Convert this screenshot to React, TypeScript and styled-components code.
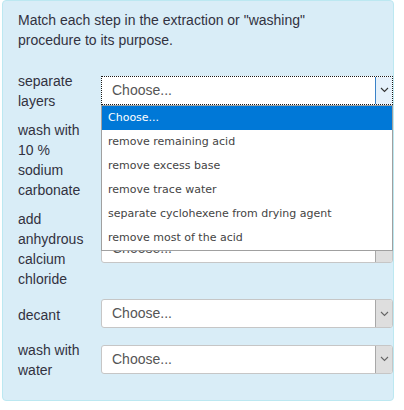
import React from 'react';
import styled, { createGlobalStyle } from 'styled-components';

const steps = [
  { label: 'separate layers', open: true },
  { label: 'wash with 10 % sodium carbonate' },
  { label: 'add anhydrous calcium chloride' },
  { label: 'decant' },
  { label: 'wash with water' },
];

const options = [
  'Choose...',
  'remove remaining acid',
  'remove excess base',
  'remove trace water',
  'separate cyclohexene from drying agent',
  'remove most of the acid',
];

const App = () => {
  return (
    <>
      <GlobalStyle />
      <Panel>
        <Question>Match each step in the extraction or "washing" procedure to its purpose.</Question>
        <Rows>
          {steps.map((step, index) => (
            <Row key={index}>
              <StepLabel>{step.label}</StepLabel>
              <SelectBox $focused={!!step.open}>
                <SelectText>Choose...</SelectText>
                <ArrowButton $focused={!!step.open}>
                  <svg width="9" height="6" viewBox="0 0 9 6">
                    <path d="M1 1 L4.5 4.5 L8 1" fill="none" stroke="currentColor" strokeWidth="1.1" />
                  </svg>
                </ArrowButton>
                {step.open && (
                  <OptionList>
                    {options.map((opt, i) => (
                      <OptionItem key={i} $active={i === 0}>{opt}</OptionItem>
                    ))}
                  </OptionList>
                )}
              </SelectBox>
            </Row>
          ))}
        </Rows>
      </Panel>
    </>
  );
};

export default App;

const GlobalStyle = createGlobalStyle`
  body {
    margin: 0;
    background: #fff;
    font-family: "Liberation Sans", Arial, sans-serif;
  }
`;

const Panel = styled.div`
  width: 392px;
  box-sizing: border-box;
  margin-left: 2px;
  padding: 9px 0 20px 15px;
  background: #d9edf7;
  border: 1px solid #bce8f1;
  border-radius: 4px;
  color: #32323f;
  font-size: 14px;
  line-height: 20px;
`;

const Question = styled.div`
  max-width: 320px;
  margin-bottom: 21px;
`;

const Rows = styled.div`
  display: flex;
  flex-direction: column;
  gap: 9px;
`;

const Row = styled.div`
  display: grid;
  grid-template-columns: 77px 1fr;
  column-gap: 6px;
  align-items: center;
`;

const StepLabel = styled.div`
  line-height: 20px;
`;

const SelectBox = styled.div<{ $focused: boolean }>`
  position: relative;
  display: flex;
  align-items: stretch;
  height: 29px;
  box-sizing: border-box;
  margin: 1px 0 3px;
  background: #fff;
  border: 1px ${p => (p.$focused ? 'dotted #1a1a1a' : 'solid #c6c6c6')};
  border-radius: ${p => (p.$focused ? '0' : '3px')};
`;

const SelectText = styled.div`
  flex: 1;
  padding-left: 10px;
  line-height: 27px;
  color: #555;
  font-size: 14px;
`;

const ArrowButton = styled.div<{ $focused: boolean }>`
  width: 16px;
  display: flex;
  align-items: center;
  justify-content: center;
  background: ${p => (p.$focused ? '#e5f1fb' : '#dedede')};
  border-left: 1px solid ${p => (p.$focused ? '#3a82c8' : '#a8a8a8')};
  color: ${p => (p.$focused ? '#333' : '#666')};
  border-radius: ${p => (p.$focused ? '0' : '0 2px 2px 0')};
`;

const OptionList = styled.div`
  position: absolute;
  top: calc(100% + 1px);
  left: -1px;
  right: -1px;
  z-index: 5;
  background: #fff;
  border: 1px solid #a0a0a0;
  font-family: "DejaVu Sans", Verdana, sans-serif;
  font-size: 11px;
`;

const OptionItem = styled.div<{ $active: boolean }>`
  height: 24px;
  line-height: 24px;
  padding-left: 6px;
  white-space: nowrap;
  background: ${p => (p.$active ? '#0078d7' : '#fff')};
  color: ${p => (p.$active ? '#fff' : '#444')};
`;
